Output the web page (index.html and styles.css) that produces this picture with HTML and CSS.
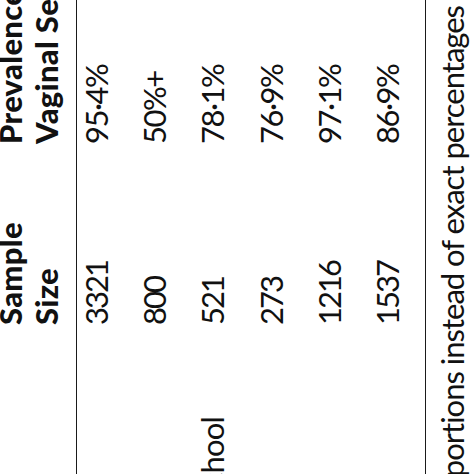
FILE: index.html
```html
<!DOCTYPE html>
<html lang="en">
<head>
<meta charset="utf-8">
<title>Table</title>
<link rel="stylesheet" href="styles.css">
</head>
<body>
<div class="page">
  <div class="table">
    <div class="thead">
      <div class="cell c1"></div>
      <div class="cell c2 th"><div>Sample</div><div>Size</div></div>
      <div class="cell c3 th"><div>Prevalence of</div><div>Vaginal Sex</div></div>
    </div>
    <div class="tbody">
      <div class="row"><div class="cell c1"></div><div class="cell c2 num">3321</div><div class="cell c3 pct">95·4%</div></div>
      <div class="row"><div class="cell c1"></div><div class="cell c2 num">800</div><div class="cell c3 pct">50%+</div></div>
      <div class="row"><div class="cell c1">Secondary School</div><div class="cell c2 num">521</div><div class="cell c3 pct">78·1%</div></div>
      <div class="row"><div class="cell c1"></div><div class="cell c2 num">273</div><div class="cell c3 pct">76·9%</div></div>
      <div class="row"><div class="cell c1"></div><div class="cell c2 num">1216</div><div class="cell c3 pct">97·1%</div></div>
      <div class="row"><div class="cell c1"></div><div class="cell c2 num">1537</div><div class="cell c3 pct">86·9%</div></div>
    </div>
  </div>
  <div class="foot"><span>Studies reported proportions instead of exact percentages</span></div>
</div>
</body>
</html>
```
FILE: styles.css
```css
html, body {
  margin: 0;
  padding: 0;
  background: #ffffff;
  overflow: hidden;
}
.page {
  width: 474px;
  height: 474px;
  overflow: hidden;
  transform: rotate(-90deg);
  transform-origin: 50% 50%;
  font-family: "Lato", "Open Sans", sans-serif;
  font-size: 31px;
  line-height: 36px;
  color: #111111;
  background: #ffffff;
}
.table {
  margin-left: -220px;
  width: 694px;
  margin-top: -8px;
}
.thead, .row {
  display: grid;
  grid-template-columns: 369px 181px 1fr;
}
.thead {
  padding-bottom: 12px;
  border-bottom: 1.5px solid #1a1a1a;
}
.th {
  font-weight: 900;
  letter-spacing: 0.3px;
}
.cell {
  white-space: nowrap;
}
.c1 {
  text-align: right;
  padding-right: 92px;
  letter-spacing: -0.8px;
}
.num {
  letter-spacing: -2px;
}
.pct {
  letter-spacing: -1.5px;
}
.tbody {
  height: 349px;
  padding-top: 0.5px;
  border-bottom: 1.5px solid #1a1a1a;
  box-sizing: border-box;
}
.row {
  height: 58.4px;
}
.foot {
  display: flex;
  justify-content: flex-end;
  padding-right: 6px;
  margin-top: 8px;
  white-space: nowrap;
  letter-spacing: -1px;
}
```
